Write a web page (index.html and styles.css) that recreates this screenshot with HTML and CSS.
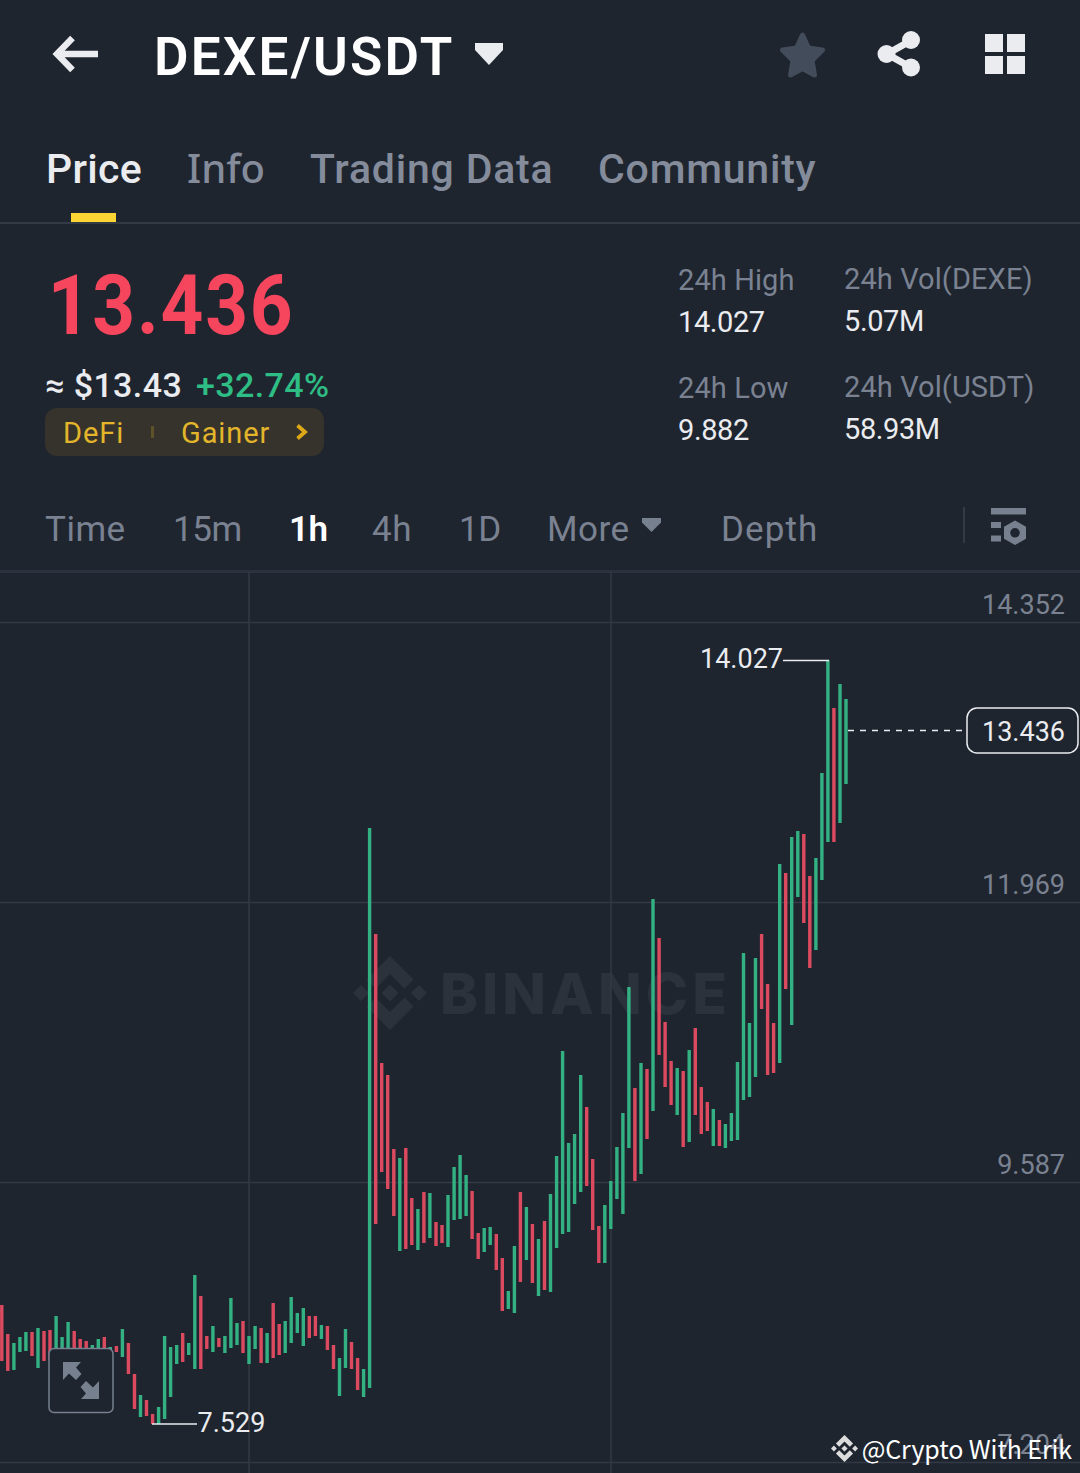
FILE: index.html
```html
<!DOCTYPE html>
<html lang="en">
<head>
    <meta charset="UTF-8">
    <meta name="viewport" content="width=device-width, initial-scale=1.0">
    <title>DEXE/USDT</title>
    <link rel="stylesheet" href="styles.css">
</head>
<body>
    <header class="topbar">
        <svg class="back" width="46" height="38" viewBox="0 0 46 38">
            <path d="M46 19H7M20.500 3L5 19l15.500 16" fill="none" stroke="#eaecef" stroke-width="6.500"/>
        </svg>
        <h1 class="pair">DEXE/USDT</h1>
        <svg class="pair-caret" width="28" height="22" viewBox="0 0 28 22">
            <path d="M0 0h28v7L14 22 0 7z" fill="#eaecef"/>
        </svg>
        <div class="actions">
            <svg width="46" height="48" viewBox="0 0 46 48">
                <path d="M23.500 5l6 13 14 2-10.500 10.500L35.500 45l-12-6.500L11.500 45l2.500-14.500L3.500 20l14-2z" fill="#434c5a" stroke="#434c5a" stroke-width="5" stroke-linejoin="round"/>
            </svg>
            <svg width="44" height="48" viewBox="0 0 44 48">
                <path d="M35 10L10 24l25 14" fill="none" stroke="#eaecef" stroke-width="7"/>
                <circle cx="34" cy="10" r="9" fill="#eaecef"/>
                <circle cx="9.500" cy="24" r="9" fill="#eaecef"/>
                <circle cx="34" cy="37.500" r="9" fill="#eaecef"/>
            </svg>
            <svg width="40" height="40" viewBox="0 0 40 40">
                <path d="M0 0h18v18H0zM22 0h18v18H22zM0 22h18v18H0zM22 22h18v18H22z" fill="#eaecef"/>
            </svg>
        </div>
    </header>

    <nav class="tabs">
        <span class="tab active">Price</span>
        <span class="tab info">Info</span>
        <span class="tab">Trading Data</span>
        <span class="tab">Community</span>
    </nav>

    <section class="summary">
        <div class="quote">
            <div class="last-price">13.436</div>
            <div class="fiat">
                <span class="usd">≈ $13.43</span>
                <span class="change">+32.74%</span>
            </div>
            <div class="tags">
                <span class="tag-defi">DeFi</span>
                <i class="tag-divider"></i>
                <span class="tag-gainer">Gainer</span>
                <svg width="13" height="16" viewBox="0 0 13 16">
                    <path d="M1.500 1.500L9 8l-7.500 6.500" fill="none" stroke="#dfa816" stroke-width="3.800"/>
                </svg>
            </div>
        </div>
        <div class="stats">
            <div class="stat">
                <div class="label">24h High</div>
                <div class="value">14.027</div>
            </div>
            <div class="stat vol">
                <div class="label">24h Vol(DEXE)</div>
                <div class="value">5.07M</div>
            </div>
            <div class="stat">
                <div class="label">24h Low</div>
                <div class="value">9.882</div>
            </div>
            <div class="stat vol">
                <div class="label">24h Vol(USDT)</div>
                <div class="value">58.93M</div>
            </div>
        </div>
    </section>

    <nav class="intervals">
        <span>Time</span>
        <span class="tight">15m</span>
        <span class="tight selected">1h</span>
        <span>4h</span>
        <span class="tight">1D</span>
        <span>More</span>
        <svg class="more-caret" width="19" height="14" viewBox="0 0 19 14">
            <path d="M0 0h19v4.500L9.500 14 0 4.500z" fill="#76808f"/>
        </svg>
        <span class="depth">Depth</span>
        <i class="divider"></i>
        <svg class="settings" width="36" height="37" viewBox="0 0 36 37">
            <path d="M0 0h35v6.500H0zM0 14h10v6H0zM0 27.500h10v6H0z" fill="#76808f"/>
            <path fill-rule="evenodd" d="M24 12.500l11 6.200v12L24 37l-11-6.300v-12zM24 20a4.800 4.800 0 1 0 0 9.600 4.800 4.800 0 0 0 0-9.600z" fill="#76808f"/>
        </svg>
    </nav>

    <main class="chart">
        <svg class="plot" width="1080" height="903" viewBox="0 570 1080 903">
            <g class="watermark">
                <path d="M390 956l23.500 23.500-9 9L390 974l-14.500 14.500-9-9zM390 1030l23.500-23.500-9-9L390 1012l-14.500-14.500-9 9zM390 984.500l8.500 8.500-8.500 8.500-8.500-8.500zM361 985l8 8-8 8-8-8zM419 985l8 8-8 8-8-8z"/>
                <text x="440" y="1013.500" textLength="287">BINANCE</text>
            </g>
            <g class="grid">
                <path class="edge" d="M0 571.500H1080"/>
                <path d="M0 622.500H1080M0 902.500H1080M0 1182.500H1080M0 1462.500H1080"/>
                <path d="M249 572V1473M611 572V1473"/>
            </g>
            <g class="axis">
                <text x="1065" y="614">14.352</text>
                <text x="1065" y="894">11.969</text>
                <text x="1065" y="1174">9.587</text>
                <text x="1065" y="1454">7.204</text>
            </g>
            <g id="candles"></g>
            <g class="marks">
                <path d="M783 660.500H829M152 1424H197"/>
                <path d="M848 730.500H964" stroke-dasharray="6 6"/>
                <text x="700" y="668">14.027</text>
                <text x="197.500" y="1432">7.529</text>
                <rect x="967" y="708" width="111" height="45" rx="10"/>
                <text x="982" y="741">13.436</text>
            </g>
            <g class="expand">
                <rect x="49" y="1348.500" width="64" height="64" rx="5"/>
                <path d="M63 1362h18l-5 5.500 5.500 6.500-5.500 6-7-6.500-6 6.500zM99 1399H81l5-5.500-5.500-6.500 5.500-6 7 6.500 6-6.500z"/>
            </g>
        </svg>
        <div class="credit">
            <svg width="27" height="27" viewBox="0 0 74 74">
                <path d="M37 0l23.500 23.500-9 9L37 18 22.500 32.500l-9-9zM37 74l23.500-23.500-9-9L37 56 22.500 41.500l-9 9zM37 28.500l8.500 8.500-8.500 8.500-8.500-8.500zM8 29l8 8-8 8-8-8zM66 29l8 8-8 8-8-8z" fill="#dcdcdc"/>
            </svg>
            <span>@Crypto With Erik</span>
        </div>
    </main>
    <script src="chart.js"></script>
</body>
</html>
```
FILE: styles.css
```css
html,
body {
    margin: 0;
    padding: 0;
}

body {
    width: 1080px;
    height: 1473px;
    overflow: hidden;
    background-color: #1f252f;
    color: #eaecef;
    font-family: Roboto, sans-serif;
}

svg {
    display: block;
    flex: none;
}

.topbar {
    display: flex;
    align-items: center;
    box-sizing: border-box;
    height: 108px;
    padding: 0 55px 0 52px;
}

.pair {
    width: 300px;
    margin: 6px 0 0 56px;
    color: #fff;
    font-size: 53px;
    font-weight: 600;
    line-height: 60px;
    letter-spacing: 2.2px;
    white-space: nowrap;
}

.pair-caret {
    margin-left: 21px;
}

.actions {
    display: flex;
    align-items: center;
    margin-left: auto;
    gap: 52px;
}

.actions svg:last-child {
    margin-left: 12px;
}

.tabs {
    display: grid;
    grid-template-columns: 141px 123px 288px auto;
    box-sizing: border-box;
    height: 116px;
    padding-left: 46px;
    border-bottom: 2px solid #333a45;
    color: #848c9b;
    font-size: 41px;
    font-weight: 500;
    line-height: 122px;
    letter-spacing: 0.8px;
    white-space: nowrap;
}

.tab {
    height: 114px;
}

.tab.active {
    position: relative;
    color: #eaecef;
    letter-spacing: 0.3px;
}

.tab.info {
    font-family: "Noto Sans", sans-serif;
    font-size: 40px;
    line-height: 120px;
    letter-spacing: 0;
}

/* yellow marker under the open tab */
.tab.active::after {
    content: "";
    position: absolute;
    left: 25px;
    bottom: 0;
    width: 45px;
    height: 9px;
    background-color: #fcd535;
}

.summary {
    display: flex;
    justify-content: space-between;
    height: 262px;
}

.quote {
    padding: 31px 0 0 45px;
}

.last-price {
    height: 100px;
    padding-left: 3px;
    color: #f6465d;
    font-size: 84px;
    font-weight: 700;
    line-height: 101px;
    letter-spacing: 2px;
    transform: scaleX(0.89);
    transform-origin: left;
}

.fiat {
    display: flex;
    height: 53px;
    font-size: 34px;
    font-weight: 500;
    line-height: 60px;
    letter-spacing: 0.4px;
}

.usd {
    width: 151px;
}

.change {
    color: #2ebd85;
}

.tags {
    display: flex;
    align-items: center;
    box-sizing: border-box;
    width: 279px;
    height: 48px;
    padding-left: 18px;
    border-radius: 12px;
    background-color: #35332b;
    color: #e3b52b;
    font-size: 29px;
    line-height: 36px;
    letter-spacing: 0.9px;
}

.tags span {
    padding-top: 2px;
}

.tag-defi {
    width: 88px;
}

.tag-divider {
    width: 3px;
    height: 12px;
    background-color: #5f5227;
}

.tag-gainer {
    width: 115px;
    margin-left: 27px;
}

.stats {
    display: grid;
    grid-template-columns: 166px 236px;
    grid-auto-rows: 108px;
    padding-top: 35px;
    font-size: 29px;
    line-height: 42px;
    letter-spacing: 0.1px;
    white-space: nowrap;
}

.stat.vol {
    margin-top: -1px;
}

.label {
    color: #7a8291;
}

.value {
    letter-spacing: -0.4px;
}

.intervals {
    display: grid;
    grid-template-columns: 128px 116px 83px 87px 88px 95px 79px 242px 27px auto;
    align-items: center;
    height: 84px;
    padding-left: 45px;
    color: #7a8291;
    font-size: 35px;
    letter-spacing: 0.5px;
}

.intervals span {
    padding-top: 2px;
}

.intervals .tight {
    letter-spacing: -0.4px;
}

.intervals .depth {
    letter-spacing: 1.1px;
}

.intervals .selected {
    color: #fff;
    font-weight: 600;
}

.more-caret {
    margin-top: -6px;
}

.divider {
    width: 2px;
    height: 36px;
    margin-top: -6px;
    background-color: #333a45;
}

.settings {
    margin: -3px 0 0 1px;
}

.chart {
    position: relative;
    height: 903px;
}

.plot text {
    font-size: 27px;
}

.plot .watermark {
    fill: #2c323c;
}

.plot .watermark text {
    font-family: Inter, sans-serif;
    font-size: 57px;
    font-weight: 800;
}

.grid path {
    fill: none;
    stroke: #333a44;
    stroke-width: 1.5;
}

.grid .edge {
    stroke: #2b323d;
    stroke-width: 3;
}

.axis text {
    fill: #7a8291;
    text-anchor: end;
}

#candles path {
    fill: none;
    stroke-width: 3.4;
}

#candles .up {
    stroke: #33b183;
}

#candles .down {
    stroke: #dc4a60;
}

.marks path,
.marks rect {
    fill: #1f252f;
    stroke: #eaecef;
    stroke-width: 1.5;
}

.marks text {
    fill: #eaecef;
}

.expand rect {
    fill: #1f252f;
    stroke: #76808f;
    stroke-width: 1.5;
}

.expand path {
    fill: #76808f;
}

/* author credit sits over the last axis label */
.credit {
    position: absolute;
    right: 8px;
    bottom: 7px;
    display: flex;
    align-items: center;
    gap: 4px;
    color: #fff;
    font-family: "Noto Sans CJK SC", sans-serif;
    font-size: 25px;
    font-weight: 400;
    line-height: 36px;
    letter-spacing: -0.1px;
    white-space: nowrap;
}
```
FILE: chart.js
```js
// [direction, top, bottom] for every hourly bar, left to right
const bars = [
    ['d', 1305, 1361], ['d', 1334, 1371], ['u', 1343, 1370], ['u', 1337, 1352], ['u', 1332, 1351],
    ['d', 1332, 1356], ['u', 1328, 1368], ['d', 1331, 1361], ['d', 1330, 1360], ['u', 1316, 1360],
    ['u', 1337, 1355], ['u', 1322, 1360], ['d', 1331, 1360], ['d', 1339, 1355], ['d', 1341, 1355],
    ['u', 1345, 1355], ['u', 1339, 1355], ['d', 1337, 1355], ['u', 1347, 1352], ['d', 1346, 1352],
    ['u', 1329, 1357], ['d', 1343, 1374], ['d', 1374, 1409], ['u', 1395, 1417], ['d', 1400, 1416],
    ['d', 1414, 1424], ['u', 1407, 1424], ['u', 1336, 1419], ['u', 1347, 1397], ['u', 1345, 1364],
    ['d', 1333, 1362], ['u', 1343, 1355], ['u', 1275, 1369], ['d', 1296, 1369], ['d', 1336, 1349],
    ['u', 1326, 1352], ['d', 1338, 1347], ['u', 1336, 1353], ['u', 1298, 1348], ['u', 1323, 1345],
    ['d', 1321, 1353], ['u', 1336, 1364], ['u', 1326, 1349], ['d', 1328, 1363], ['u', 1333, 1363],
    ['d', 1303, 1358], ['d', 1324, 1355], ['u', 1321, 1353], ['u', 1297, 1343], ['u', 1313, 1333],
    ['u', 1308, 1346], ['d', 1316, 1338], ['d', 1316, 1336], ['u', 1325, 1339], ['d', 1326, 1350],
    ['d', 1345, 1369], ['u', 1358, 1396], ['u', 1329, 1368], ['d', 1342, 1369], ['d', 1358, 1390],
    ['u', 1369, 1397], ['u', 828, 1388], ['d', 934, 1224], ['d', 1063, 1172], ['d', 1075, 1189],
    ['d', 1149, 1216], ['u', 1158, 1251], ['d', 1148, 1249], ['d', 1198, 1245], ['u', 1209, 1250],
    ['d', 1192, 1243], ['u', 1193, 1238], ['d', 1222, 1246], ['d', 1225, 1243], ['u', 1195, 1247],
    ['u', 1167, 1220], ['u', 1155, 1219], ['u', 1175, 1216], ['d', 1191, 1239], ['d', 1233, 1259],
    ['u', 1228, 1252], ['u', 1227, 1245], ['d', 1234, 1270], ['d', 1258, 1311], ['u', 1291, 1309],
    ['u', 1246, 1313], ['d', 1192, 1282], ['u', 1207, 1260], ['d', 1224, 1283], ['u', 1239, 1296],
    ['d', 1221, 1290], ['u', 1194, 1292], ['u', 1156, 1248], ['u', 1051, 1234], ['u', 1143, 1232],
    ['u', 1134, 1204], ['u', 1075, 1192], ['d', 1107, 1186], ['d', 1159, 1230], ['d', 1226, 1263],
    ['u', 1205, 1263], ['u', 1181, 1229], ['u', 1147, 1199], ['u', 1113, 1214], ['u', 987, 1148],
    ['d', 1088, 1181], ['u', 1063, 1174], ['d', 1069, 1139], ['u', 899, 1111], ['d', 938, 1055],
    ['d', 1022, 1087], ['d', 1061, 1105], ['u', 1068, 1115], ['d', 1071, 1147], ['u', 1050, 1142],
    ['d', 1028, 1115], ['d', 1087, 1134], ['d', 1102, 1131], ['u', 1109, 1146], ['d', 1120, 1146],
    ['u', 1124, 1148], ['u', 1113, 1141], ['u', 1062, 1140], ['u', 953, 1100], ['u', 1023, 1097],
    ['u', 958, 1077], ['d', 934, 1009], ['d', 984, 1075], ['d', 1023, 1073], ['u', 864, 1063],
    ['d', 873, 989], ['u', 837, 1025], ['u', 831, 897], ['d', 834, 923], ['d', 876, 968],
    ['u', 858, 950], ['u', 773, 880], ['u', 660, 842], ['d', 708, 842], ['u', 684, 823],
    ['u', 699, 784]
];

const firstX = 1.8;
const step = 6.03;
const paths = { u: '', d: '' };

bars.forEach(([dir, top, bottom], i) => {
    paths[dir] += `M${(firstX + i * step).toFixed(1)} ${top}V${bottom}`;
});

document.getElementById('candles').innerHTML =
    `<path class="up" d="${paths.u}"/><path class="down" d="${paths.d}"/>`;
```
